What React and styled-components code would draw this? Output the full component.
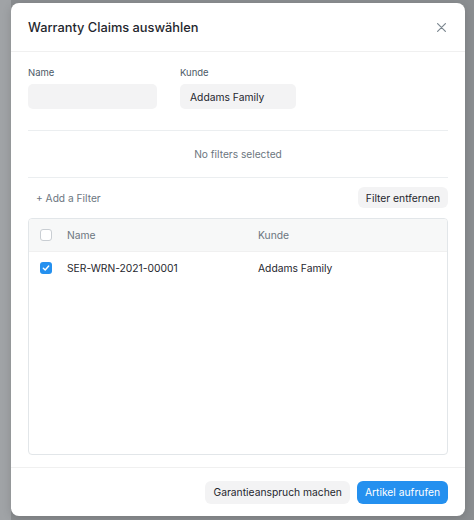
import styled, { createGlobalStyle } from "styled-components";

const GlobalStyle = createGlobalStyle`
  html, body {
    margin: 0;
    padding: 0;
    background: #8b8e91;
  }
  body {
    font-family: Inter, "Noto Sans", sans-serif;
    color: #1f272e;
  }
`;

const Backdrop = styled.div`
  width: 474px;
  height: 520px;
  box-sizing: border-box;
  padding: 3px 9px 4px 11px;
  background: linear-gradient(to right, #a0a3a6 0 11px, #8b8e91 11px);
  overflow: hidden;
`;

const Modal = styled.div`
  width: 454px;
  height: 513px;
  background: #fff;
  border-radius: 8px;
  display: flex;
  flex-direction: column;
  box-shadow: 0 2px 10px rgba(0, 0, 0, 0.15);
`;

const Header = styled.div`
  height: 48px;
  flex-shrink: 0;
  display: flex;
  align-items: center;
  justify-content: space-between;
  padding: 0 19px 0 17px;
  border-bottom: 1px solid #f0f0f0;
`;

const Title = styled.div`
  font-size: 12.8px;
  font-weight: 500;
  color: #1f272e;
`;

const Close = styled.button`
  border: none;
  background: none;
  padding: 0;
  width: 9px;
  height: 9px;
  display: flex;
  cursor: pointer;
`;

const Body = styled.div`
  flex: 1;
  display: flex;
  flex-direction: column;
  padding: 14px 17px 12px;
  border-bottom: 1px solid #f0f0f0;
`;

const Fields = styled.div`
  display: flex;
  gap: 23px;
  padding-bottom: 21px;
  border-bottom: 1px solid #ebeef0;
`;

const Field = styled.div`
  display: flex;
  flex-direction: column;
  gap: 4px;
`;

const Label = styled.div`
  font-size: 9.5px;
  line-height: 14px;
  color: #4c5a67;
`;

const Input = styled.div`
  width: ${({ w }) => w}px;
  height: 25px;
  box-sizing: border-box;
  padding: 0 10px;
  border-radius: 5px;
  background: #f3f3f4;
  font-size: 10.3px;
  color: #1f272e;
  display: flex;
  align-items: center;
`;

const NoFilters = styled.div`
  height: 46px;
  display: flex;
  align-items: center;
  justify-content: center;
  font-size: 10.2px;
  color: #6c7680;
  border-bottom: 1px solid #ebeef0;
`;

const FilterBar = styled.div`
  display: flex;
  align-items: center;
  justify-content: space-between;
  padding: 9px 0 10px 8px;
`;

const AddFilter = styled.div`
  font-size: 10.2px;
  color: #6c7680;
`;

const Button = styled.button`
  border: none;
  height: ${({ h }) => h || 23}px;
  padding: 0 8px;
  border-radius: 6px;
  font-family: Inter, "Noto Sans", sans-serif;
  font-size: 10.3px;
  background: ${({ primary }) => (primary ? "#2490ef" : "#f3f3f4")};
  color: ${({ primary }) => (primary ? "#fff" : "#1f272e")};
  cursor: pointer;
`;

const Table = styled.div`
  flex: 1;
  border: 1px solid #e2e6e9;
  border-radius: 4px;
  display: flex;
  flex-direction: column;
  overflow: hidden;
`;

const Row = styled.div`
  height: 32px;
  flex-shrink: 0;
  display: grid;
  grid-template-columns: 27px 191px 1fr;
  align-items: center;
  padding-left: 11px;
  font-size: 10.3px;
  background: ${({ head }) => (head ? "#f7f8f8" : "#fff")};
  color: ${({ head }) => (head ? "#6c7680" : "#1f272e")};
  border-bottom: ${({ head }) => (head ? "1px solid #f0f0f0" : "none")};
`;

const Check = styled.div`
  width: 12px;
  height: 12px;
  box-sizing: border-box;
  border-radius: 3px;
  border: ${({ on }) => (on ? "none" : "1px solid #c9ced3")};
  background: ${({ on }) => (on ? "#2490ef" : "#fff")};
  display: flex;
  align-items: center;
  justify-content: center;
`;

const Footer = styled.div`
  height: 48px;
  flex-shrink: 0;
  display: flex;
  align-items: center;
  justify-content: flex-end;
  gap: 7px;
  padding: 0 17px;
`;

const App = () => {
  return (
    <>
      <GlobalStyle />
      <Backdrop>
        <Modal>
          <Header>
            <Title>Warranty Claims auswählen</Title>
            <Close aria-label="close">
              <svg width="9" height="9" viewBox="0 0 9 9">
                <path d="M0.6 0.6L8.4 8.4M8.4 0.6L0.6 8.4" stroke="#7c8790" strokeWidth="1.2" strokeLinecap="round" />
              </svg>
            </Close>
          </Header>
          <Body>
            <Fields>
              <Field>
                <Label>Name</Label>
                <Input w={129} />
              </Field>
              <Field>
                <Label>Kunde</Label>
                <Input w={116}>Addams Family</Input>
              </Field>
            </Fields>
            <NoFilters>No filters selected</NoFilters>
            <FilterBar>
              <AddFilter>+ Add a Filter</AddFilter>
              <Button h={21}>Filter entfernen</Button>
            </FilterBar>
            <Table>
              <Row head>
                <Check />
                <div>Name</div>
                <div>Kunde</div>
              </Row>
              <Row>
                <Check on>
                  <svg width="8" height="8" viewBox="0 0 8 8">
                    <path d="M1.3 4.2L3.2 6L6.7 2" fill="none" stroke="#fff" strokeWidth="1.4" strokeLinecap="round" strokeLinejoin="round" />
                  </svg>
                </Check>
                <div>SER-WRN-2021-00001</div>
                <div>Addams Family</div>
              </Row>
            </Table>
          </Body>
          <Footer>
            <Button>Garantieanspruch machen</Button>
            <Button primary>Artikel aufrufen</Button>
          </Footer>
        </Modal>
      </Backdrop>
    </>
  );
};

export default App;
